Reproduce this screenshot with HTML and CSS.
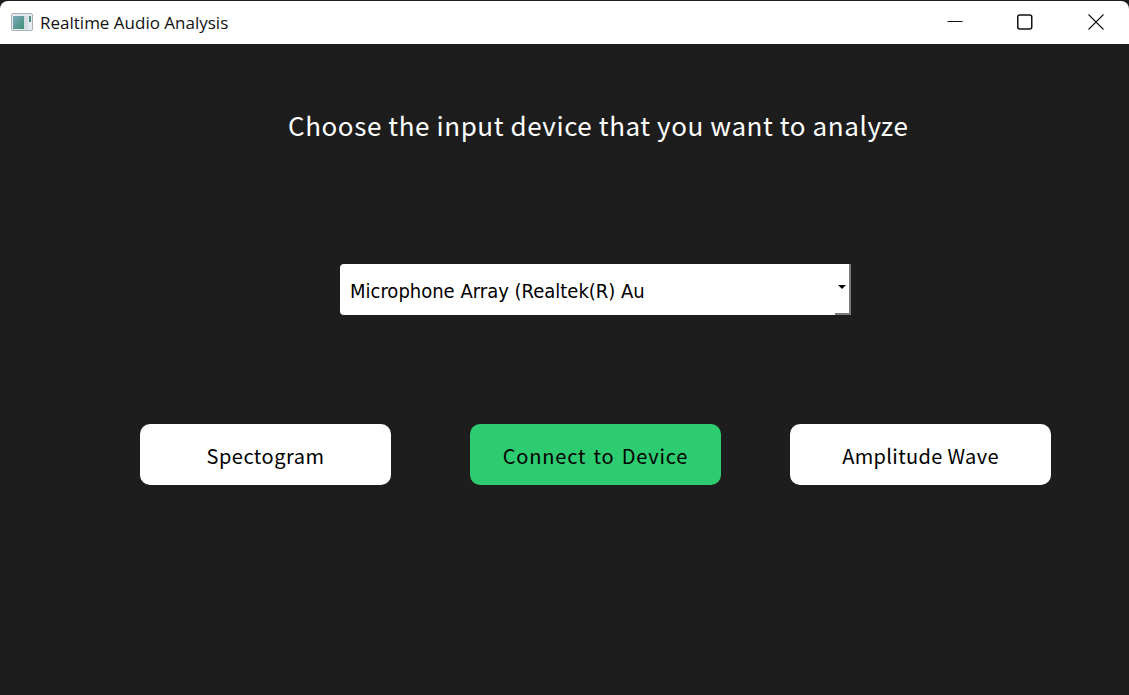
FILE: index.html
```html
<!DOCTYPE html>
<html lang="en">
<head>
<meta charset="utf-8">
<title>Realtime Audio Analysis</title>
<link rel="stylesheet" href="styles.css">
</head>
<body>
<div class="window">
  <header class="titlebar">
    <svg class="app-icon" width="24" height="20" viewBox="0 0 24 20">
      <defs>
        <linearGradient id="pane" x1="0" y1="0" x2="1" y2="1">
          <stop offset="0" stop-color="#7fa8c0"/>
          <stop offset="1" stop-color="#3f9070"/>
        </linearGradient>
      </defs>
      <rect x="1.5" y="1.5" width="21" height="17" rx="1.5" fill="#e6ebf0" stroke="#a9b0b8"/>
      <rect x="3" y="4" width="11" height="13" fill="url(#pane)"/>
      <rect x="14" y="4" width="4" height="13" fill="#d5dde2"/>
      <rect x="19" y="4" width="2" height="6" fill="#4f8f88"/>
    </svg>
    <span class="title">Realtime Audio Analysis</span>
    <div class="controls">
      <svg class="ctl ctl-min" width="16" height="16" viewBox="0 0 16 16"><path d="M0.5 7.5H15.5" fill="none" stroke="#111" stroke-width="1"/></svg>
      <svg class="ctl" width="16" height="16" viewBox="0 0 16 16"><rect x="0.75" y="1" width="14" height="14" rx="2" fill="none" stroke="#111" stroke-width="1.5"/></svg>
      <svg class="ctl" width="16" height="16" viewBox="0 0 16 16"><path d="M0.5 0.5L15.5 15.5M15.5 0.5L0.5 15.5" fill="none" stroke="#111" stroke-width="1.1"/></svg>
    </div>
  </header>
  <main class="content">
    <h1 class="heading">Choose the input device that you want to analyze</h1>
    <div class="combo">
      <span class="combo-text">Microphone Array (Realtek(R) Au</span>
      <div class="combo-drop"><span class="arrow"></span></div>
    </div>
    <div class="actions">
      <button class="btn btn-spec">Spectogram</button>
      <button class="btn btn-connect">Connect to Device</button>
      <button class="btn btn-amp">Amplitude Wave</button>
    </div>
  </main>
</div>
</body>
</html>
```
FILE: styles.css
```css
* { box-sizing: border-box; }
html, body { margin: 0; padding: 0; height: 100%; background: #1d1d1d; overflow: hidden; }
.window { width: 1129px; height: 695px; display: flex; flex-direction: column; background: #1d1d1d; padding-top: 1px; }
.titlebar {
  height: 43px; background: #fff; display: flex; align-items: center;
  border-radius: 8px 8px 0 0; padding-left: 10px; flex: none;
}
.app-icon { flex: none; margin-top: -1px; }
.title {
  margin-left: 6px; font-family: "Open Sans", "Noto Sans", sans-serif;
  font-size: 17px; color: #111;
}
.controls { margin-left: auto; display: flex; align-items: center; gap: 55px; padding-right: 25px; margin-top: -1px; }
.ctl { display: block; }
.ctl-min { margin-right: -1px; }
.content { flex: 1; display: flex; flex-direction: column; }
.heading {
  margin: 64px 0 0 288px; font-family: "Noto Sans CJK JP", "Noto Sans", sans-serif;
  font-weight: 400; font-size: 26px; line-height: 34px; letter-spacing: 0.58px; color: #fff; white-space: nowrap;
}
.combo {
  margin: 122px 0 0 340px; width: 511px; height: 51px; background: #fff;
  border-radius: 4px 0 0 4px; display: flex; align-items: center;
}
.combo-text {
  padding: 3px 0 0 10px; font-family: "DejaVu Sans Condensed", "DejaVu Sans", sans-serif; font-size: 20px; color: #000; white-space: nowrap;
}
.combo-drop {
  margin-left: auto; width: 16px; height: 51px; display: flex; align-items: center; justify-content: center;
  border-right: 2px solid #7a7a7a; border-bottom: 2px solid #7a7a7a; padding-bottom: 3px;
}
.arrow { width: 0; height: 0; border-left: 4px solid transparent; border-right: 4px solid transparent; border-top: 4px solid #000; }
.actions { margin: 109px 0 0 140px; display: flex; }
.btn {
  height: 61px; border: 0; border-radius: 10px; background: #fff; color: #000;
  font-family: "Noto Sans CJK JP", "Noto Sans", sans-serif; font-size: 20px; letter-spacing: 0.5px; padding: 2px 0 0;
}
.btn-spec { width: 251px; }
.btn-connect { width: 251px; margin-left: 79px; background: #2ecc71; letter-spacing: 0.8px; word-spacing: 2px; }
.btn-amp { width: 261px; margin-left: 69px; letter-spacing: 0.35px; }
```
